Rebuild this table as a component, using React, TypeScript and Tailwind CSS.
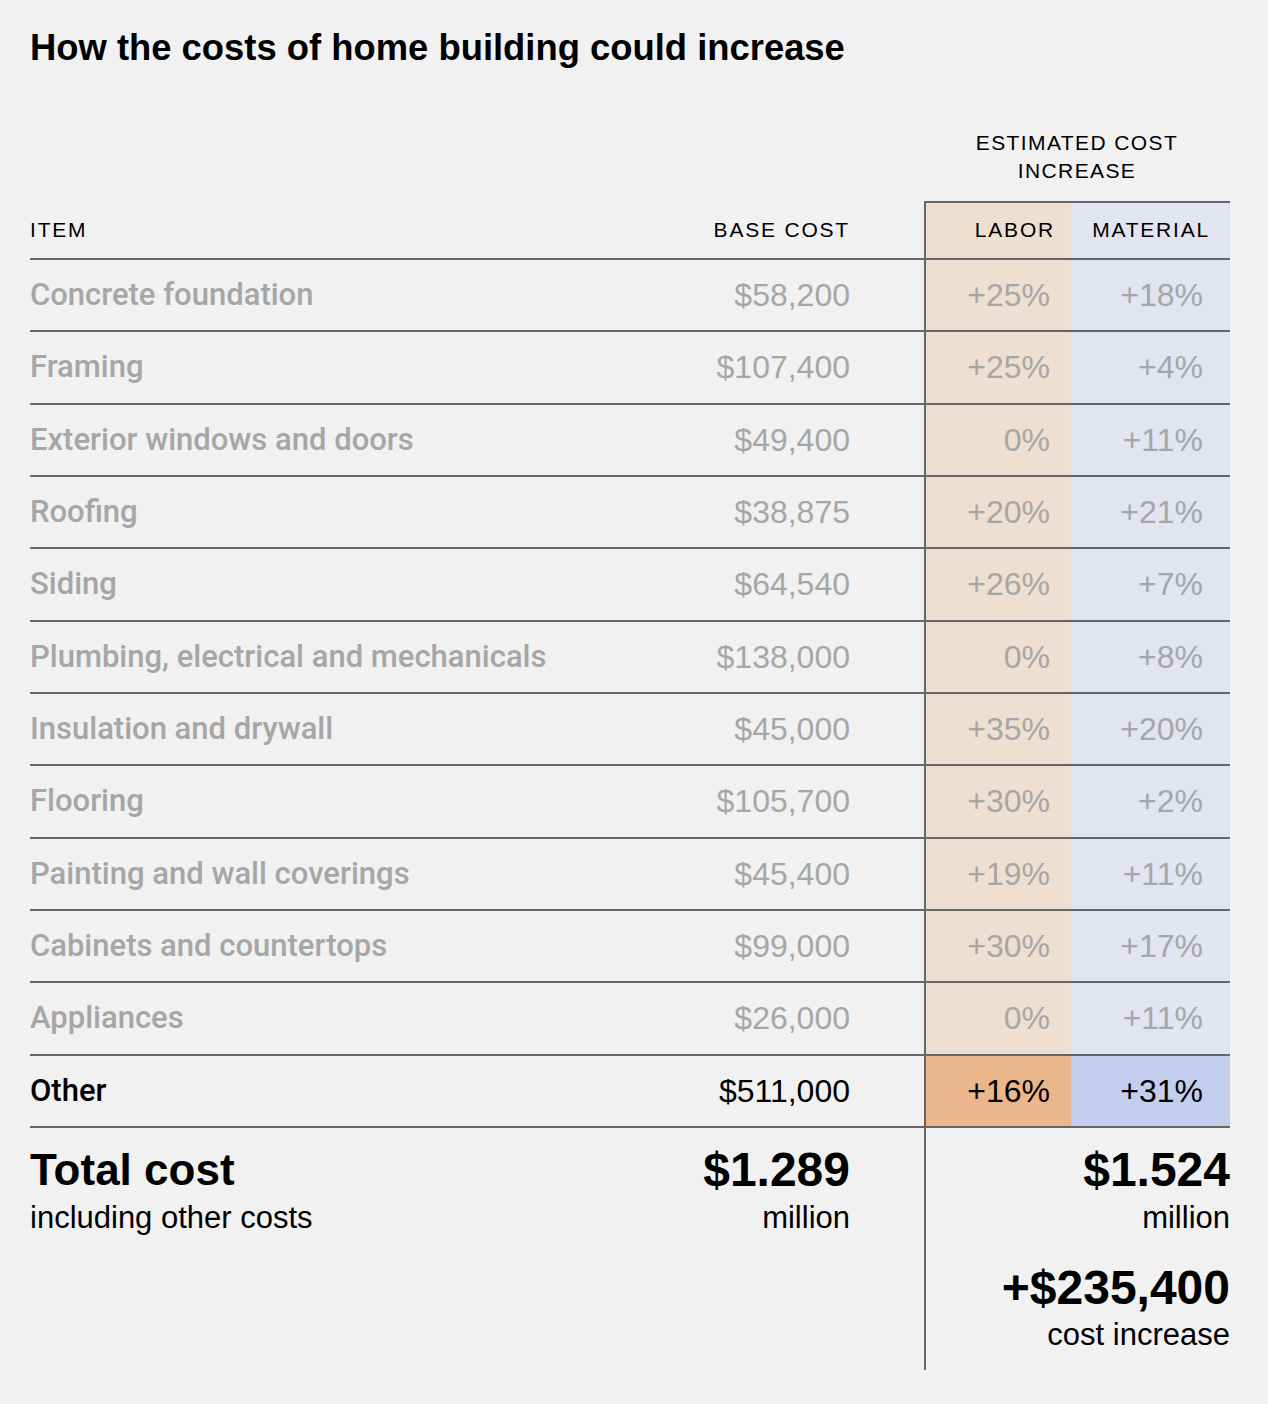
const rows = [
  { item: "Concrete foundation", base: "$58,200", labor: "+25%", material: "+18%" },
  { item: "Framing", base: "$107,400", labor: "+25%", material: "+4%" },
  { item: "Exterior windows and doors", base: "$49,400", labor: "0%", material: "+11%" },
  { item: "Roofing", base: "$38,875", labor: "+20%", material: "+21%" },
  { item: "Siding", base: "$64,540", labor: "+26%", material: "+7%" },
  { item: "Plumbing, electrical and mechanicals", base: "$138,000", labor: "0%", material: "+8%" },
  { item: "Insulation and drywall", base: "$45,000", labor: "+35%", material: "+20%" },
  { item: "Flooring", base: "$105,700", labor: "+30%", material: "+2%" },
  { item: "Painting and wall coverings", base: "$45,400", labor: "+19%", material: "+11%" },
  { item: "Cabinets and countertops", base: "$99,000", labor: "+30%", material: "+17%" },
  { item: "Appliances", base: "$26,000", labor: "0%", material: "+11%" },
];

function Row({ item, base, labor, material, dark }: { item: string; base: string; labor: string; material: string; dark?: boolean }) {
  return (
    <div className={"grid grid-cols-[1fr_260px_147px_159px] h-[72.33px] border-b-2 border-[#666666] text-[32px] " + (dark ? "text-black" : "text-[#a6a6a6]")}>
      <div className="flex items-center font-['Roboto',sans-serif] font-medium text-[31px]">{item}</div>
      <div className="flex items-center justify-end pr-[74px]">{base}</div>
      <div className={"flex items-center justify-end pr-[21px] border-l-2 border-[#666666] " + (dark ? "bg-[#ebb68b]" : "bg-[#efdfd1]")}>{labor}</div>
      <div className={"flex items-center justify-end pr-[27px] " + (dark ? "bg-[#c3cdee]" : "bg-[#e2e4f0]")}>{material}</div>
    </div>
  );
}

export default function App() {
  return (
    <div className="min-h-[1404px] w-[1268px] bg-[#f1f1f1] pl-[30px] pr-[38px] pt-[26px] font-['Liberation_Sans',Arial,sans-serif] text-black">
      <h1 className="text-[36.4px] leading-[44px] font-bold">How the costs of home building could increase</h1>

      <div className="grid grid-cols-[1fr_260px_306px] mt-[59px]">
        <div />
        <div />
        <div className="text-center text-[21px] leading-[28px] tracking-[1.4px]">
          ESTIMATED COST
          <br />
          INCREASE
        </div>
      </div>

      <div className="grid grid-cols-[1fr_260px_147px_159px] h-[59px] mt-[16px] border-b-2 border-[#666666] text-[21px] tracking-[1.8px]">
        <div className="flex items-center">ITEM</div>
        <div className="flex items-center justify-end pr-[74px]">BASE COST</div>
        <div className="flex items-center justify-end pr-[16px] pb-[2px] border-l-2 border-t-2 border-[#666666] bg-[#efdfd1]">LABOR</div>
        <div className="flex items-center justify-end pr-[20px] pb-[2px] border-t-2 border-[#666666] bg-[#e2e4f0]">MATERIAL</div>
      </div>

      {rows.map((r) => (
        <Row key={r.item} {...r} />
      ))}
      <Row item="Other" base="$511,000" labor="+16%" material="+31%" dark />

      <div className="grid grid-cols-[1fr_260px_306px]">
        <div className="pt-[16px]">
          <div className="text-[44px] leading-[52px] font-bold">Total cost</div>
          <div className="mt-[4px] text-[31px] leading-[36px]">including other costs</div>
        </div>
        <div className="pt-[16px] pr-[74px] text-right">
          <div className="text-[48px] leading-[52px] font-bold">$1.289</div>
          <div className="mt-[4px] text-[31px] leading-[36px]">million</div>
        </div>
        <div className="border-l-2 border-[#666666] pt-[16px] pb-[17px] text-right">
          <div className="text-[48px] leading-[52px] font-bold">$1.524</div>
          <div className="mt-[4px] text-[31px] leading-[36px]">million</div>
          <div className="mt-[26px] text-[48px] leading-[52px] font-bold">+$235,400</div>
          <div className="mt-[3px] text-[31px] leading-[36px]">cost increase</div>
        </div>
      </div>
    </div>
  );
}
